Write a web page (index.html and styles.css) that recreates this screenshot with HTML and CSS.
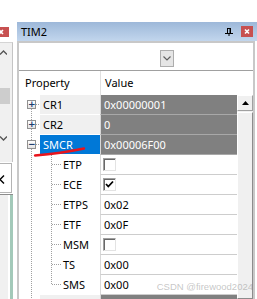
FILE: index.html
```html
<!DOCTYPE html>
<html lang="en">

<head>
    <meta charset="UTF-8">
    <title>TIM2</title>
    <link rel="stylesheet" href="styles.css">
</head>

<body>

    <div class="side">
        <div class="side-close">
            <svg width="9" height="10" viewBox="0 0 9 10"><path d="M-1 3 L3 7 M3 3 L-1 7" stroke="#fff" stroke-width="1.6"/></svg>
        </div>
        <div class="side-scroll">
            <svg class="side-chev up" width="7" height="5" viewBox="0 0 7 5"><path d="M0 4.5 L3.5 1 L7 4.5" fill="none" stroke="#555" stroke-width="1.3"/></svg>
            <div class="side-thumb"></div>
            <svg class="side-chev down" width="7" height="5" viewBox="0 0 7 5"><path d="M0 0.5 L3.5 4 L7 0.5" fill="none" stroke="#555" stroke-width="1.3"/></svg>
        </div>
        <div class="side-tab">
            <svg width="5" height="9" viewBox="0 0 5 9"><path d="M0 4.5 L4 0.5 M0 4.5 L4 8.5" stroke="#000" stroke-width="1.4"/></svg>
        </div>
        <div class="side-frame"></div>
    </div>

    <div class="main">
        <div class="title">
            <span class="title-text">TIM2</span>
            <svg class="pin" width="8" height="8" viewBox="0 0 8 8">
                <path d="M2 0.5 H5.5 V5 M2.5 0.5 V5" fill="none" stroke="#000" stroke-width="1"/>
                <rect x="4.5" y="0" width="1.5" height="5" fill="#000"/>
                <path d="M0 5.5 H8 M4 5.5 V8" stroke="#000" stroke-width="1"/>
            </svg>
            <span class="close">
                <svg width="12" height="11" viewBox="0 0 12 11"><path d="M4 3.5 L8 7.5 M8 3.5 L4 7.5" stroke="#fff" stroke-width="1.6"/></svg>
            </span>
        </div>

        <div class="frame">
            <div class="toolbar">
                <div class="combo">
                    <svg width="8" height="5" viewBox="0 0 8 5"><path d="M0.5 0.5 L4 4 L7.5 0.5" fill="none" stroke="#606060" stroke-width="1.2"/></svg>
                </div>
            </div>

            <div class="head">
                <div class="h-prop">Property</div>
                <div class="h-val">Value</div>
            </div>

            <div class="grid">
                <div class="rows">
                    <div class="row">
                        <div class="prop">
                            <div class="tree first"><span class="box">+</span></div>
                            <div class="label">CR1</div>
                        </div>
                        <div class="val changed">0x00000001</div>
                    </div>
                    <div class="row">
                        <div class="prop">
                            <div class="tree"><span class="box">+</span></div>
                            <div class="label">CR2</div>
                        </div>
                        <div class="val changed">0</div>
                    </div>
                    <div class="row">
                        <div class="prop">
                            <div class="tree"><span class="box">&minus;</span></div>
                            <div class="label selected">SMCR</div>
                        </div>
                        <div class="val changed">0x00006F00</div>
                    </div>
                    <div class="row">
                        <div class="prop">
                            <div class="tree child"></div>
                            <div class="sublabel">ETP</div>
                        </div>
                        <div class="val"><span class="check"></span></div>
                    </div>
                    <div class="row">
                        <div class="prop">
                            <div class="tree child"></div>
                            <div class="sublabel">ECE</div>
                        </div>
                        <div class="val">
                            <span class="check">
                                <svg width="11" height="11" viewBox="0 0 11 11"><path d="M2 5 L4.3 7.5 L9 2.5" fill="none" stroke="#000" stroke-width="1.8"/></svg>
                            </span>
                        </div>
                    </div>
                    <div class="row">
                        <div class="prop">
                            <div class="tree child"></div>
                            <div class="sublabel">ETPS</div>
                        </div>
                        <div class="val">0x02</div>
                    </div>
                    <div class="row">
                        <div class="prop">
                            <div class="tree child"></div>
                            <div class="sublabel">ETF</div>
                        </div>
                        <div class="val">0x0F</div>
                    </div>
                    <div class="row">
                        <div class="prop">
                            <div class="tree child"></div>
                            <div class="sublabel">MSM</div>
                        </div>
                        <div class="val"><span class="check"></span></div>
                    </div>
                    <div class="row">
                        <div class="prop">
                            <div class="tree child"></div>
                            <div class="sublabel">TS</div>
                        </div>
                        <div class="val">0x00</div>
                    </div>
                    <div class="row">
                        <div class="prop">
                            <div class="tree child last"></div>
                            <div class="sublabel">SMS</div>
                        </div>
                        <div class="val">0x00</div>
                    </div>
                    <!-- next register, only its top edge shows -->
                    <div class="row">
                        <div class="prop">
                            <div class="tree"></div>
                            <div class="label"></div>
                        </div>
                        <div class="val changed"></div>
                    </div>
                </div>

                <div class="vscroll">
                    <div class="vs-up">
                        <svg width="7" height="4" viewBox="0 0 7 4"><path d="M0 4 L3.5 0 L7 4 Z" fill="#000"/></svg>
                    </div>
                    <div class="vs-thumb"></div>
                </div>
            </div>
        </div>
    </div>

    <svg class="mark" width="54" height="12" viewBox="0 0 54 12">
        <path d="M2 9.5 C 14 8.5, 32 6.5, 51 2.5" fill="none" stroke="#e8141c" stroke-width="2.4" stroke-linecap="round"/>
    </svg>

    <div class="watermark">CSDN @firewood2024</div>

</body>

</html>
```

FILE: styles.css
```css
body {
    margin: 0;
    width: 257px;
    height: 299px;
    overflow: hidden;
    display: flex;
    position: relative;
    background-color: #fff;
    font-family: 'Noto Sans', sans-serif;
    font-size: 11px;
    color: #000;
}

/* left, cut-off panel */

.side {
    width: 13px;
    margin-right: 4px;
    display: flex;
    flex-direction: column;
}

.side-close {
    width: 9px;
    height: 10px;
    margin-top: 27px;
    background-color: #c75050;
    display: flex;
}

.side-scroll {
    height: 120px;
    margin-top: 5px;
    background-color: #f0f0f0;
    border-top: 1px solid #d4d4d4;
    border-right: 1px solid #c4c4c4;
    box-sizing: border-box;
    display: flex;
    flex-direction: column;
}

.side-chev {
    display: block;
}

.side-chev.up {
    margin-top: 7px;
}

.side-thumb {
    width: 10px;
    height: 16px;
    margin-top: 33px;
    background-color: #cdcdcd;
}

.side-chev.down {
    margin-top: 32px;
}

.side-tab {
    height: 30px;
    margin-top: 1px;
    width: 12px;
    background-color: #fff;
    border: 1px solid #b4b4b4;
    border-left: 0;
    box-sizing: border-box;
    display: flex;
    align-items: center;
}

.side-tab svg {
    margin-top: 2px;
}

.side-frame {
    flex: 1;
    margin-top: 1px;
    border-top: 1px solid #8c8c8c;
    background: linear-gradient(to right, #f0f0f0 0 8px, #fff 8px 10px, #a3c9b9 10px 13px);
}

/* main window */

.main {
    flex: 1;
    min-width: 0;
    display: flex;
    flex-direction: column;
    padding-top: 22px;
}

.title {
    height: 19px;
    display: flex;
    align-items: center;
    padding-left: 4px;
    background: linear-gradient(#9db8d9, #c2d6ed);
}

.title-text {
    flex: 1;
}

.pin {
    margin-right: 8px;
    margin-top: 1px;
}

.close {
    width: 12px;
    height: 11px;
    margin-right: 4px;
    background-color: #c75050;
    display: flex;
}

.frame {
    flex: 1;
    min-height: 0;
    margin-right: 2px;
    border: 2px solid #c8c8c8;
    border-bottom: 0;
    display: flex;
    flex-direction: column;
}

.toolbar {
    height: 27px;
    flex-shrink: 0;
    border-bottom: 1px solid #a0a0a0;
}

.combo {
    width: 14px;
    height: 17px;
    margin: 7px 0 0 141px;
    box-sizing: border-box;
    background-color: #e5e5e5;
    border: 1px solid #adadad;
    display: flex;
    align-items: center;
    justify-content: center;
}

.head {
    height: 24px;
    flex-shrink: 0;
    display: flex;
    line-height: 24px;
}

.h-prop {
    width: 81px;
    padding-left: 6px;
    box-sizing: border-box;
}

.h-val {
    flex: 1;
    padding-left: 4px;
    border-left: 1px solid #e0e0e0;
}

.grid {
    flex: 1;
    min-height: 0;
    display: flex;
}

.rows {
    width: 218px;
}

.row {
    height: 20px;
    display: flex;
}

.prop {
    width: 81px;
    display: flex;
}

/* tree connectors drawn as dotted backgrounds */

.tree {
    width: 21px;
    display: flex;
    align-items: flex-start;
    background:
        repeating-linear-gradient(to right, #a0a0a0 0 1px, transparent 1px 2px) 17px 9px / 4px 1px no-repeat,
        repeating-linear-gradient(to bottom, #a0a0a0 0 1px, transparent 1px 2px) 12px 0 / 1px 100% no-repeat;
}

.tree.first {
    background:
        repeating-linear-gradient(to right, #a0a0a0 0 1px, transparent 1px 2px) 17px 9px / 4px 1px no-repeat,
        repeating-linear-gradient(to bottom, #a0a0a0 0 1px, transparent 1px 2px) 12px 10px / 1px 10px no-repeat;
}

.tree.child {
    width: 42px;
    background:
        repeating-linear-gradient(to right, #a0a0a0 0 1px, transparent 1px 2px) 33px 9px / 9px 1px no-repeat,
        repeating-linear-gradient(to bottom, #a0a0a0 0 1px, transparent 1px 2px) 32px 0 / 1px 100% no-repeat,
        repeating-linear-gradient(to bottom, #a0a0a0 0 1px, transparent 1px 2px) 12px 0 / 1px 100% no-repeat;
}

.tree.child.last {
    background:
        repeating-linear-gradient(to right, #a0a0a0 0 1px, transparent 1px 2px) 33px 9px / 9px 1px no-repeat,
        repeating-linear-gradient(to bottom, #a0a0a0 0 1px, transparent 1px 2px) 32px 0 / 1px 10px no-repeat,
        repeating-linear-gradient(to bottom, #a0a0a0 0 1px, transparent 1px 2px) 12px 0 / 1px 100% no-repeat;
}

.box {
    width: 9px;
    height: 9px;
    margin: 5px 0 0 8px;
    box-sizing: border-box;
    border: 1px solid #919191;
    background: linear-gradient(#fff, #e4e4e4);
    color: #1c3e6e;
    font-family: 'DejaVu Sans', sans-serif;
    font-size: 9px;
    line-height: 6px;
    text-align: center;
    font-weight: bold;
}

.label {
    flex: 1;
    height: 19px;
    line-height: 19px;
    padding-left: 3px;
    background-color: #f0f0f0;
}

.label.selected {
    background-color: #0078d7;
    color: #fff;
}

.sublabel {
    flex: 1;
    line-height: 19px;
    padding-left: 2px;
}

.val {
    flex: 1;
    display: flex;
    align-items: center;
    padding-left: 3px;
    border-left: 1px solid #d8d8d8;
    border-bottom: 1px solid #cdcdcd;
    line-height: 19px;
    white-space: nowrap;
}

.val.changed {
    background-color: #808080;
    color: #fff;
    border-bottom-color: #a8a8a8;
}

.check {
    width: 13px;
    height: 13px;
    margin-left: -1px;
    box-sizing: border-box;
    background-color: #fff;
    border: 1px solid;
    border-color: #a0a0a0 #e3e3e3 #e3e3e3 #a0a0a0;
    box-shadow: inset 1px 1px #696969;
    display: flex;
    align-items: center;
    justify-content: center;
}

.vscroll {
    width: 16px;
    display: flex;
    flex-direction: column;
    background-color: #f0f0f0;
}

.vs-up {
    height: 16px;
    box-sizing: border-box;
    border: 1px solid;
    border-color: #fff #a0a0a0 #a0a0a0 #fff;
    background-color: #f0f0f0;
    display: flex;
    align-items: center;
    justify-content: center;
}

.vs-thumb {
    flex: 1;
    margin-top: 1px;
    box-sizing: border-box;
    border: 1px solid;
    border-color: #fff #8c8c8c #8c8c8c #fff;
    background-color: #f0f0f0;
}

/* red hand-drawn mark under SMCR */
.mark {
    position: absolute;
    left: 33px;
    top: 146px;
}

.watermark {
    position: absolute;
    right: 4px;
    top: 281px;
    font-family: 'Liberation Sans', sans-serif;
    font-size: 9.5px;
    color: rgba(150, 150, 150, 0.55);
}
```
